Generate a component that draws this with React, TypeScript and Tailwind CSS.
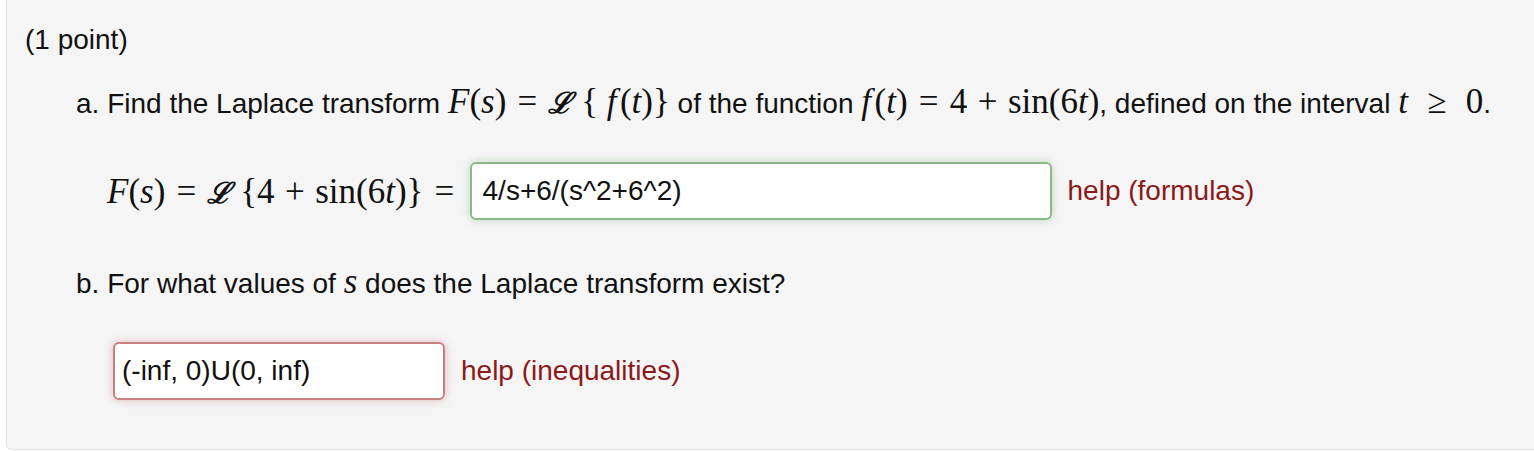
const serif = "font-['Liberation_Serif','Times_New_Roman',serif]";

const I = ({ children }: { children: React.ReactNode }) => <span className="italic">{children}</span>;

// italic f needs a little room before its bracket
const Fn = () => <span className="italic mr-[0.1em]">f</span>;

const Rel = ({ children }: { children: React.ReactNode }) => (
  <span className="mx-[0.32em]">{children}</span>
);

const Bin = ({ children }: { children: React.ReactNode }) => (
  <span className="mx-[0.3em]">{children}</span>
);

const Math = ({ children }: { children: React.ReactNode }) => (
  <span className={`${serif} text-[35px] leading-none whitespace-nowrap`}>{children}</span>
);

const CalL = () => (
  <span className="font-['DejaVu_Serif',serif] italic font-bold text-[29px] mr-[0.3em]">ℒ</span>
);

export default function App() {
  return (
    <div className="min-h-screen bg-white pl-[6px] font-['Liberation_Sans',Arial,sans-serif] text-[28px] leading-[40px] text-[#111]">
      <div className="bg-[#f5f5f5] border-l border-b border-[#e2e2e2] rounded-bl-[6px] pl-[18px] pt-[20px] pb-[49px]">
        <p>(1 point)</p>

        <div className="ml-[51px]">
          <p className="mt-[24px] whitespace-nowrap">
            a. Find the Laplace transform{" "}
            <Math>
              <I>F</I>(<I>s</I>)<Rel>=</Rel>
              <CalL />
              {"{"} <Fn />(<I>t</I>){"}"}
            </Math>{" "}
            of the function{" "}
            <Math>
              <Fn />(<I>t</I>)<Rel>=</Rel>4<Bin>+</Bin>sin(6<I>t</I>)
            </Math>
            , defined on the interval{" "}
            <Math>
              <I>t</I>
              <span className="mx-[0.55em]">≥</span>0
            </Math>
            .
          </p>

          <div className="mt-[38px] ml-[31px] flex items-center">
            <Math>
              <I>F</I>(<I>s</I>)<Rel>=</Rel>
              <CalL />
              {"{"}4<Bin>+</Bin>sin(6<I>t</I>){"}"}
              <Rel>=</Rel>
            </Math>
            <input
              readOnly
              value="4/s+6/(s^2+6^2)"
              className="ml-[4px] w-[582px] h-[58px] rounded-[6px] border-2 border-[#8db889] bg-white px-[11px] text-[28px] text-[#111] font-['Liberation_Sans',Arial,sans-serif] shadow-[0_0_8px_rgba(90,160,85,0.35)] outline-none"
            />
            <a className="ml-[16px] text-[#8a1a1a] cursor-pointer">help (formulas)</a>
          </div>

          <p className="mt-[44px] whitespace-nowrap">
            b. For what values of{" "}
            <Math>
              <I>s</I>
            </Math>{" "}
            does the Laplace transform exist?
          </p>

          <div className="mt-[38px] ml-[37px] flex items-center">
            <input
              readOnly
              value="(-inf, 0)U(0, inf)"
              className="w-[332px] h-[58px] rounded-[6px] border-2 border-[#c98080] bg-white px-[7px] text-[28px] text-[#111] font-['Liberation_Sans',Arial,sans-serif] shadow-[0_0_8px_rgba(190,80,80,0.35)] outline-none"
            />
            <a className="ml-[16px] text-[#8a1a1a] cursor-pointer">help (inequalities)</a>
          </div>
        </div>
      </div>
    </div>
  );
}
